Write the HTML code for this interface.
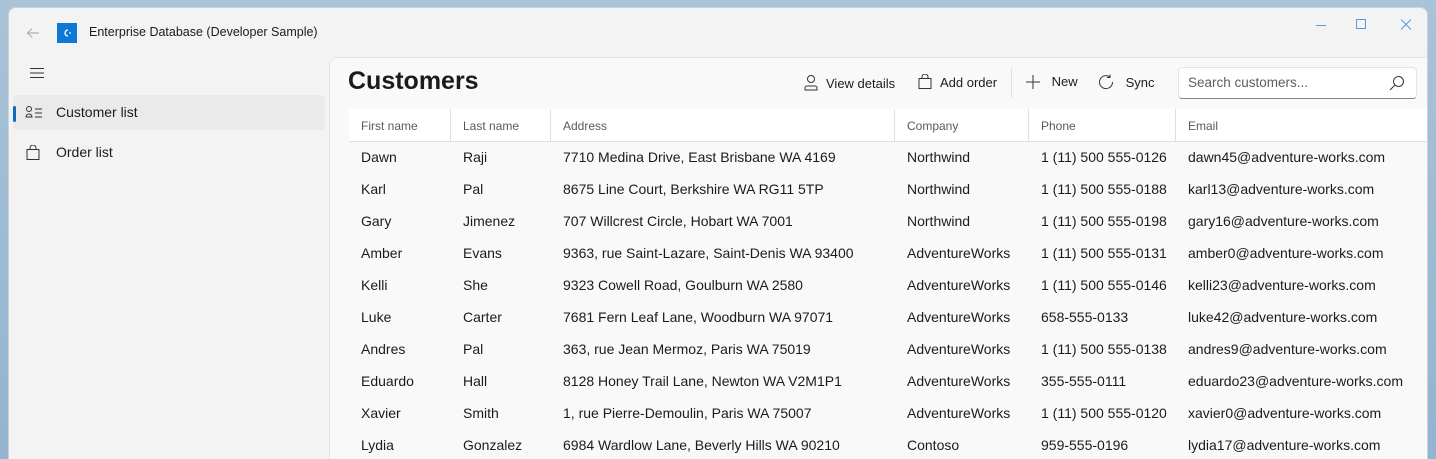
<!DOCTYPE html>
<html style="overflow:hidden;width:1436px;height:459px"><head><style>
*{margin:0;padding:0;box-sizing:border-box}
body{width:1436px;height:459px;overflow:hidden;background:linear-gradient(#a9c3d8,#93b4cf);font-family:"Segoe UI","Liberation Sans",sans-serif;color:#1b1b1b;position:relative}
.win{position:absolute;left:8px;top:7px;width:1420px;height:452px;background:#f3f3f3;border-radius:8px 8px 0 0;border:1px solid #c9d3dc;border-bottom:none;overflow:hidden}
.abs{position:absolute}
.t{font-size:13px}
.card{position:absolute;left:320px;top:49px;width:1100px;height:420px;background:#f9f9f9;border:1px solid #e5e5e5;border-radius:8px 0 0 0}
.hdr{position:absolute;left:19px;top:51px;width:1080px;height:33px;background:#fff;border-bottom:1px solid #e0e0e0}
.hdr span{position:absolute;top:10px;font-size:12px;color:#5a5a5a}
.sep{position:absolute;top:0;width:1px;height:33px;background:#e0e0e0}
.row{position:absolute;left:19px;width:1080px;height:32px;font-size:14px}
.row span{position:absolute;top:7px;white-space:nowrap}
.btn{position:absolute;top:16px;font-size:13px;display:flex;align-items:center;gap:8px}
</style></head><body>
<div class="win">
 <svg class="abs" style="left:17px;top:18px" width="14" height="14" viewBox="0 0 14 14"><path d="M13 7H2M6 2.5 1.5 7 6 11.5" stroke="#b0b0b0" stroke-width="1.2" fill="none"/></svg>
 <div class="abs" style="left:48px;top:15px;width:20px;height:20px;background:#0f78d4"></div>
 <svg class="abs" style="left:48px;top:15px" width="20" height="20"><path d="M11 7a3 3 0 1 0 0 6" stroke="#fff" fill="none" stroke-width="1.3"/><circle cx="13" cy="10" r="0.9" fill="#fff"/></svg>
 <div class="abs t" style="left:80px;top:17px;font-size:12.5px">Enterprise Database (Developer Sample)</div>
 <svg class="abs" style="left:1307px;top:10px" width="100" height="14"><path d="M0 7.5h10" stroke="#5a9ad8"/><rect x="40.5" y="1.5" width="9" height="9" stroke="#5a9ad8" fill="none"/><path d="M85 1.5l10 10M95 1.5l-10 10" stroke="#5a9ad8"/></svg>
 <svg class="abs" style="left:21px;top:59px" width="14" height="12"><path d="M0 1.5h14M0 6h14M0 10.5h14" stroke="#333" stroke-width="1"/></svg>
 <div class="abs" style="left:4px;top:87px;width:312px;height:35px;background:#eaeaea;border-radius:5px"></div>
 <div class="abs" style="left:4px;top:98px;width:3px;height:16px;background:#0f6cbd;border-radius:2px"></div>
 <svg class="abs" style="left:16px;top:97px" width="18" height="16"><circle cx="4" cy="4" r="2.5" stroke="#333" fill="none"/><path d="M1 12a3 3 0 0 1 6 0zM10 4h7M10 8h7M10 12h7" stroke="#333" fill="none"/></svg>
 <div class="abs" style="left:47px;top:96px;font-size:14px">Customer list</div>
 <svg class="abs" style="left:17px;top:137px" width="14" height="16"><rect x="1" y="4.5" width="12" height="10" stroke="#333" fill="none"/><path d="M4 4.5V3a3 3 0 0 1 6 0v1.5" stroke="#333" fill="none"/></svg>
 <div class="abs" style="left:47px;top:136px;font-size:14px">Order list</div>
 <div class="card">
  <div class="abs" style="left:18px;top:9px;font-size:25px;font-weight:600">Customers</div>
  <div class="btn" style="left:474px"><svg width="14" height="18"><circle cx="7" cy="5" r="3.5" stroke="#333" fill="none"/><path d="M1 16v-2a2 2 0 0 1 2-2h8a2 2 0 0 1 2 2v2z" stroke="#333" fill="none"/></svg>View details</div>
  <div class="btn" style="left:588px"><svg width="14" height="16"><rect x="1" y="4.5" width="12" height="10" stroke="#333" fill="none"/><path d="M4 4.5V3a3 3 0 0 1 6 0v1.5" stroke="#333" fill="none"/></svg>Add order</div>
  <div class="abs" style="left:681px;top:10px;width:1px;height:30px;background:#e0e0e0"></div>
  <div class="btn" style="left:696px"><svg width="14" height="14"><path d="M7 0v14M0 7h14" stroke="#333"/></svg>&nbsp;New</div>
  <div class="btn" style="left:768px"><svg width="16" height="16"><path d="M12 3A6.5 6.5 0 1 0 14.5 8M12 0.5V3.5H9" stroke="#333" fill="none"/></svg>&nbsp;Sync</div>
  <div class="abs" style="left:848px;top:9px;width:239px;height:32px;background:#fff;border:1px solid #e3e3e3;border-bottom-color:#888;border-radius:4px"><span class="abs" style="left:9px;top:7px;font-size:13.5px;color:#5e5e5e">Search customers...</span><svg class="abs" style="left:210px;top:7px" width="16" height="16"><circle cx="9.5" cy="6.5" r="5" stroke="#333" fill="none"/><path d="M6 10 1 15" stroke="#333"/></svg></div>
  <div class="hdr">
   <span style="left:12px">First name</span><div class="sep" style="left:101px"></div>
   <span style="left:114px">Last name</span><div class="sep" style="left:201px"></div>
   <span style="left:214px">Address</span><div class="sep" style="left:545px"></div>
   <span style="left:558px">Company</span><div class="sep" style="left:679px"></div>
   <span style="left:692px">Phone</span><div class="sep" style="left:826px"></div>
   <span style="left:839px">Email</span>
  </div>
  <div class="row" style="top:84px"><span style="left:12px">Dawn</span><span style="left:114px">Raji</span><span style="left:214px">7710 Medina Drive, East Brisbane WA 4169</span><span style="left:558px">Northwind</span><span style="left:692px">1 (11) 500 555-0126</span><span style="left:839px">dawn45@adventure-works.com</span></div>
  <div class="row" style="top:116px"><span style="left:12px">Karl</span><span style="left:114px">Pal</span><span style="left:214px">8675 Line Court, Berkshire WA RG11 5TP</span><span style="left:558px">Northwind</span><span style="left:692px">1 (11) 500 555-0188</span><span style="left:839px">karl13@adventure-works.com</span></div>
  <div class="row" style="top:148px"><span style="left:12px">Gary</span><span style="left:114px">Jimenez</span><span style="left:214px">707 Willcrest Circle, Hobart WA 7001</span><span style="left:558px">Northwind</span><span style="left:692px">1 (11) 500 555-0198</span><span style="left:839px">gary16@adventure-works.com</span></div>
  <div class="row" style="top:180px"><span style="left:12px">Amber</span><span style="left:114px">Evans</span><span style="left:214px">9363, rue Saint-Lazare, Saint-Denis WA 93400</span><span style="left:558px">AdventureWorks</span><span style="left:692px">1 (11) 500 555-0131</span><span style="left:839px">amber0@adventure-works.com</span></div>
  <div class="row" style="top:212px"><span style="left:12px">Kelli</span><span style="left:114px">She</span><span style="left:214px">9323 Cowell Road, Goulburn WA 2580</span><span style="left:558px">AdventureWorks</span><span style="left:692px">1 (11) 500 555-0146</span><span style="left:839px">kelli23@adventure-works.com</span></div>
  <div class="row" style="top:244px"><span style="left:12px">Luke</span><span style="left:114px">Carter</span><span style="left:214px">7681 Fern Leaf Lane, Woodburn WA 97071</span><span style="left:558px">AdventureWorks</span><span style="left:692px">658-555-0133</span><span style="left:839px">luke42@adventure-works.com</span></div>
  <div class="row" style="top:276px"><span style="left:12px">Andres</span><span style="left:114px">Pal</span><span style="left:214px">363, rue Jean Mermoz, Paris WA 75019</span><span style="left:558px">AdventureWorks</span><span style="left:692px">1 (11) 500 555-0138</span><span style="left:839px">andres9@adventure-works.com</span></div>
  <div class="row" style="top:308px"><span style="left:12px">Eduardo</span><span style="left:114px">Hall</span><span style="left:214px">8128 Honey Trail Lane, Newton WA V2M1P1</span><span style="left:558px">AdventureWorks</span><span style="left:692px">355-555-0111</span><span style="left:839px">eduardo23@adventure-works.com</span></div>
  <div class="row" style="top:340px"><span style="left:12px">Xavier</span><span style="left:114px">Smith</span><span style="left:214px">1, rue Pierre-Demoulin, Paris WA 75007</span><span style="left:558px">AdventureWorks</span><span style="left:692px">1 (11) 500 555-0120</span><span style="left:839px">xavier0@adventure-works.com</span></div>
  <div class="row" style="top:372px"><span style="left:12px">Lydia</span><span style="left:114px">Gonzalez</span><span style="left:214px">6984 Wardlow Lane, Beverly Hills WA 90210</span><span style="left:558px">Contoso</span><span style="left:692px">959-555-0196</span><span style="left:839px">lydia17@adventure-works.com</span></div>
 </div>
</div>
</body></html>
